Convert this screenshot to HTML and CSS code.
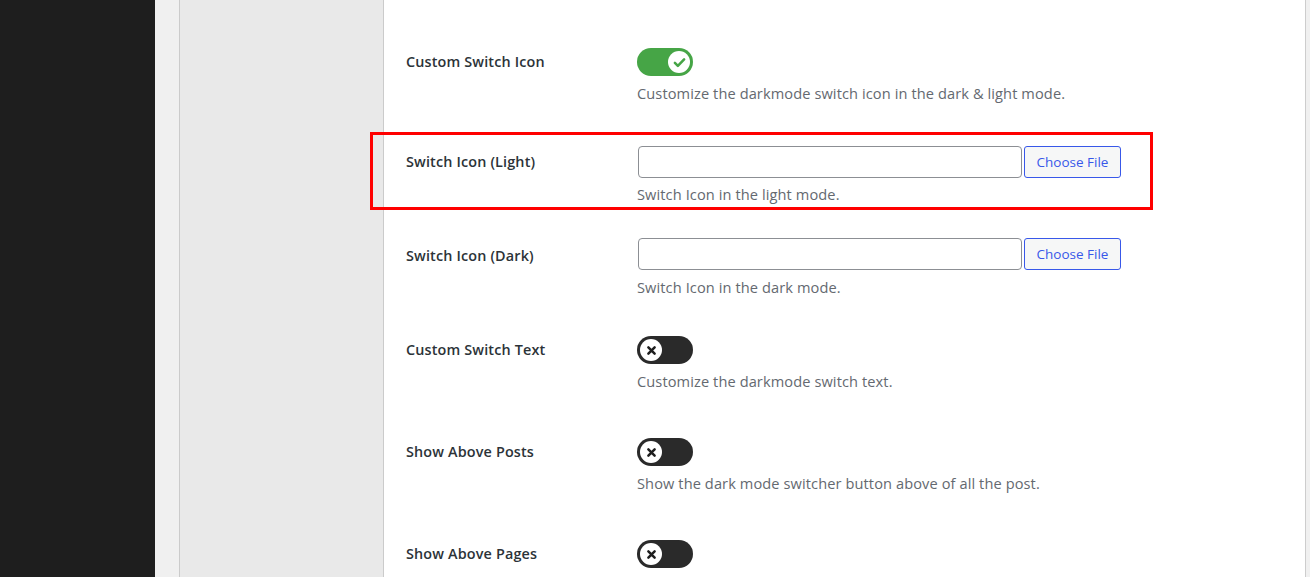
FILE: index.html
```html
<!DOCTYPE html>
<html lang="en">
<head>
<meta charset="utf-8">
<title>Dark Mode Settings</title>
<link rel="stylesheet" href="styles.css">
</head>
<body>
<div class="screen">
  <aside class="adminbar"></aside>
  <div class="gutter"></div>
  <nav class="tabs"></nav>
  <main class="panel">
    <div class="settings">
      <div class="row row--toggle">
        <div class="label">Custom Switch Icon</div>
        <div class="control">
          <span class="switch switch--on">
            <span class="knob">
              <svg viewBox="0 0 24 24" width="17" height="17"><path d="M5.5 12.5l4.2 4.2 8.8-9" fill="none" stroke="#46a546" stroke-width="3.6" stroke-linecap="round" stroke-linejoin="round"/></svg>
            </span>
          </span>
        </div>
        <p class="desc">Customize the darkmode switch icon in the dark &amp; light mode.</p>
      </div>

      <div class="row row--file row--highlight">
        <div class="label">Switch Icon (Light)</div>
        <div class="control file">
          <span class="file-input"></span>
          <button class="file-btn" type="button">Choose File</button>
        </div>
        <p class="desc">Switch Icon in the light mode.</p>
      </div>

      <div class="row row--file">
        <div class="label label--low">Switch Icon (Dark)</div>
        <div class="control file">
          <span class="file-input"></span>
          <button class="file-btn" type="button">Choose File</button>
        </div>
        <p class="desc">Switch Icon in the dark mode.</p>
      </div>

      <div class="row row--toggle">
        <div class="label">Custom Switch Text</div>
        <div class="control">
          <span class="switch switch--off">
            <span class="knob">
              <svg viewBox="0 0 24 24" width="15" height="15"><path d="M7 7l10 10M17 7L7 17" fill="none" stroke="#1e1e1e" stroke-width="4" stroke-linecap="round"/></svg>
            </span>
          </span>
        </div>
        <p class="desc">Customize the darkmode switch text.</p>
      </div>

      <div class="row row--toggle">
        <div class="label">Show Above Posts</div>
        <div class="control">
          <span class="switch switch--off">
            <span class="knob">
              <svg viewBox="0 0 24 24" width="15" height="15"><path d="M7 7l10 10M17 7L7 17" fill="none" stroke="#1e1e1e" stroke-width="4" stroke-linecap="round"/></svg>
            </span>
          </span>
        </div>
        <p class="desc">Show the dark mode switcher button above of all the post.</p>
      </div>

      <div class="row row--toggle">
        <div class="label">Show Above Pages</div>
        <div class="control">
          <span class="switch switch--off">
            <span class="knob">
              <svg viewBox="0 0 24 24" width="15" height="15"><path d="M7 7l10 10M17 7L7 17" fill="none" stroke="#1e1e1e" stroke-width="4" stroke-linecap="round"/></svg>
            </span>
          </span>
        </div>
      </div>
    </div>
  </main>
  <div class="edge"></div>
</div>
</body>
</html>
```

FILE: styles.css
```css
*, *::before, *::after { box-sizing: border-box; }
html, body { margin: 0; padding: 0; }
body {
  width: 1310px;
  height: 577px;
  overflow: hidden;
  background: #f0f0f0;
  font-family: "Open Sans", "Noto Sans", sans-serif;
  font-size: 14px;
  color: #1d2327;
}
.screen {
  display: flex;
  height: 577px;
}
.adminbar {
  width: 155px;
  flex: none;
  background: #1e1e1e;
}
.gutter {
  width: 24px;
  flex: none;
  background: #f0f0f0;
}
.tabs {
  width: 205px;
  flex: none;
  background: #e9e9e9;
  border-left: 1px solid #cbcbcb;
  border-right: 1px solid #cbcbcb;
}
.panel {
  width: 922px;
  flex: none;
  background: #fff;
  border-right: 1px solid #cdcdcd;
  padding: 25px 0 0 22px;
}
.edge {
  flex: 1;
  background: #f0f0f0;
}
.settings {
  display: flex;
  flex-direction: column;
}
.row {
  position: relative;
  display: grid;
  grid-template-columns: 231px auto;
  align-items: center;
}
.row--toggle { padding: 23px 0 23px; }
.row--file { padding: 15px 0 15px; }
.row--highlight { padding: 19px 0 19px; }
.row--highlight .desc { margin-top: 6px; margin-bottom: 0; }
.row--highlight::after {
  content: "";
  position: absolute;
  left: -36px;
  top: 5px;
  width: 783px;
  height: 78px;
  border: 3px solid #ff0000;
  pointer-events: none;
}
.label {
  grid-column: 1;
  grid-row: 1;
  font-weight: 600;
  font-size: 14.4px;
  line-height: 20px;
  color: #2c3338;
  letter-spacing: 0.15px;
}
.label--low { padding-top: 3px; }
.control {
  grid-column: 2;
  grid-row: 1;
  display: flex;
  align-items: center;
}
.desc {
  grid-column: 2;
  grid-row: 2;
  margin: 7px 0 1px;
  font-size: 14.6px;
  line-height: 20px;
  letter-spacing: 0.1px;
  color: #646970;
}

.switch {
  width: 56px;
  height: 28px;
  border-radius: 14px;
  display: flex;
  align-items: center;
  padding: 0 3px;
}
.switch--on {
  background: #46a546;
  justify-content: flex-end;
}
.switch--off {
  background: #2a2a2a;
  justify-content: flex-start;
}
.knob {
  width: 22px;
  height: 22px;
  border-radius: 50%;
  background: #fff;
  display: flex;
  align-items: center;
  justify-content: center;
}
.file {
  gap: 2px;
  padding-left: 1px;
}
.file-input {
  width: 384px;
  height: 32px;
  border: 1px solid #8c8f94;
  border-radius: 4px;
  background: #fff;
}
.file-btn {
  width: 97px;
  height: 32px;
  border: 1px solid #3858e9;
  border-radius: 3px;
  background: #f6f7f7;
  color: #3858e9;
  font-family: "Open Sans", "Noto Sans", sans-serif;
  font-size: 13.5px;
  padding: 0;
}
```
